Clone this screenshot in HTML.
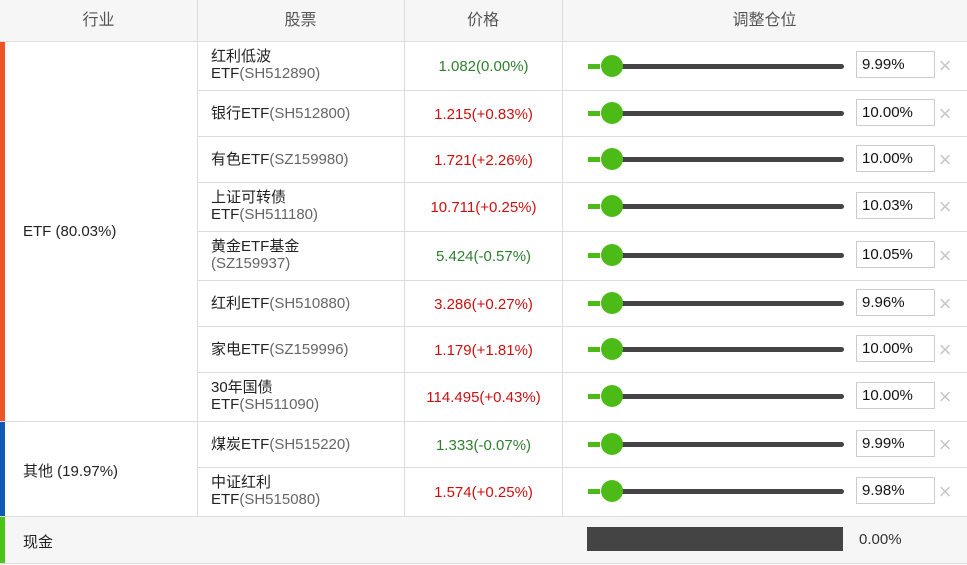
<!DOCTYPE html>
<html><head><meta charset="utf-8"><style>
*{margin:0;padding:0;box-sizing:border-box}
body{width:967px;height:565px;background:#fff;font-family:"Liberation Sans","Noto Sans CJK SC",sans-serif;font-size:15px;color:#222;position:relative;overflow:hidden}
.a{position:absolute}
.hl{position:absolute;height:1px;background:#ddd}
.vl{position:absolute;width:1px;background:#ddd}
.h{position:absolute;top:0;height:41px;line-height:41px;text-align:center;color:#555;font-size:16px}
.nm{position:absolute;left:211px;line-height:17px}
.nm span{color:#666}
.pr{position:absolute;left:405px;width:157px;text-align:center}
.g{color:#2f7f2f}.r{color:#cc1010}
.sl{position:absolute;left:587px;width:257px;height:24px}
.sl .gs{position:absolute;left:1px;top:10px;width:12px;height:5px;background:#4cbb17}
.sl .tr{position:absolute;left:26px;top:10px;width:231px;height:5px;border-radius:3px;background:#444}
.sl .k{position:absolute;left:14px;top:1px;width:22px;height:22px;border-radius:50%;background:#4cbb17}
.in{position:absolute;left:856px;width:79px;height:27px;border:1px solid #ccc;padding-left:5px;line-height:25px;color:#111}
.x{position:absolute;left:935px;width:20px;text-align:center;color:#c8c8c8;font-size:22px;line-height:22px}
</style></head><body>
<div class="a" style="left:0;top:0;width:967px;height:41px;background:#f6f6f6"></div>
<div class="a" style="left:0;top:516px;width:967px;height:48px;background:#f6f6f6"></div>
<div class="h" style="left:0;width:197px">行业</div>
<div class="h" style="left:197px;width:207px">股票</div>
<div class="h" style="left:404px;width:158px">价格</div>
<div class="h" style="left:562px;width:405px">调整仓位</div>
<div class="hl" style="left:0;top:41px;width:967px"></div>
<div class="hl" style="left:197px;top:90px;width:770px"></div>
<div class="hl" style="left:197px;top:136px;width:770px"></div>
<div class="hl" style="left:197px;top:182px;width:770px"></div>
<div class="hl" style="left:197px;top:231px;width:770px"></div>
<div class="hl" style="left:197px;top:280px;width:770px"></div>
<div class="hl" style="left:197px;top:326px;width:770px"></div>
<div class="hl" style="left:197px;top:372px;width:770px"></div>
<div class="hl" style="left:0;top:421px;width:967px"></div>
<div class="hl" style="left:197px;top:467px;width:770px"></div>
<div class="hl" style="left:0;top:516px;width:967px"></div>
<div class="hl" style="left:0;top:563px;width:967px"></div>
<div class="vl" style="left:197px;top:0;height:516px"></div>
<div class="vl" style="left:404px;top:0;height:516px"></div>
<div class="vl" style="left:562px;top:0;height:516px"></div>
<div class="a" style="left:0;top:42px;width:5px;height:379px;background:#ee5524"></div>
<div class="a" style="left:0;top:422px;width:5px;height:94px;background:#0d5bb5"></div>
<div class="a" style="left:0;top:517px;width:5px;height:46px;background:#4cc417"></div>
<div class="a" style="left:23px;top:223px">ETF (80.03%)</div>
<div class="a" style="left:23px;top:460px">其他 (19.97%)</div>
<div class="a" style="left:23px;top:531px">现金</div>

<div class="nm" style="top:48px">红利低波<br>ETF<span>(SH512890)</span></div>
<div class="nm" style="top:105px">银行ETF<span>(SH512800)</span></div>
<div class="nm" style="top:151px">有色ETF<span>(SZ159980)</span></div>
<div class="nm" style="top:189px">上证可转债<br>ETF<span>(SH511180)</span></div>
<div class="nm" style="top:238px">黄金ETF基金<br><span>(SZ159937)</span></div>
<div class="nm" style="top:295px">红利ETF<span>(SH510880)</span></div>
<div class="nm" style="top:341px">家电ETF<span>(SZ159996)</span></div>
<div class="nm" style="top:379px">30年国债<br>ETF<span>(SH511090)</span></div>
<div class="nm" style="top:436px">煤炭ETF<span>(SH515220)</span></div>
<div class="nm" style="top:474px">中证红利<br>ETF<span>(SH515080)</span></div>

<div class="pr g" style="top:58px">1.082(0.00%)</div>
<div class="pr r" style="top:106px">1.215(+0.83%)</div>
<div class="pr r" style="top:152px">1.721(+2.26%)</div>
<div class="pr r" style="top:199px">10.711(+0.25%)</div>
<div class="pr g" style="top:248px">5.424(-0.57%)</div>
<div class="pr r" style="top:296px">3.286(+0.27%)</div>
<div class="pr r" style="top:342px">1.179(+1.81%)</div>
<div class="pr r" style="top:389px">114.495(+0.43%)</div>
<div class="pr g" style="top:437px">1.333(-0.07%)</div>
<div class="pr r" style="top:484px">1.574(+0.25%)</div>

<div class="sl" style="top:54px"><div class="gs"></div><div class="tr"></div><div class="k"></div></div>
<div class="sl" style="top:101px"><div class="gs"></div><div class="tr"></div><div class="k"></div></div>
<div class="sl" style="top:147px"><div class="gs"></div><div class="tr"></div><div class="k"></div></div>
<div class="sl" style="top:194px"><div class="gs"></div><div class="tr"></div><div class="k"></div></div>
<div class="sl" style="top:243px"><div class="gs"></div><div class="tr"></div><div class="k"></div></div>
<div class="sl" style="top:291px"><div class="gs"></div><div class="tr"></div><div class="k"></div></div>
<div class="sl" style="top:337px"><div class="gs"></div><div class="tr"></div><div class="k"></div></div>
<div class="sl" style="top:384px"><div class="gs"></div><div class="tr"></div><div class="k"></div></div>
<div class="sl" style="top:432px"><div class="gs"></div><div class="tr"></div><div class="k"></div></div>
<div class="sl" style="top:479px"><div class="gs"></div><div class="tr"></div><div class="k"></div></div>

<div class="in" style="top:51px">9.99%</div>
<div class="in" style="top:99px">10.00%</div>
<div class="in" style="top:145px">10.00%</div>
<div class="in" style="top:192px">10.03%</div>
<div class="in" style="top:241px">10.05%</div>
<div class="in" style="top:289px">9.96%</div>
<div class="in" style="top:335px">10.00%</div>
<div class="in" style="top:382px">10.00%</div>
<div class="in" style="top:430px">9.99%</div>
<div class="in" style="top:477px">9.98%</div>

<div class="x" style="top:55px">×</div>
<div class="x" style="top:103px">×</div>
<div class="x" style="top:149px">×</div>
<div class="x" style="top:196px">×</div>
<div class="x" style="top:245px">×</div>
<div class="x" style="top:293px">×</div>
<div class="x" style="top:339px">×</div>
<div class="x" style="top:386px">×</div>
<div class="x" style="top:434px">×</div>
<div class="x" style="top:481px">×</div>

<div class="a" style="left:587px;top:527px;width:256px;height:24px;background:#444"></div>
<div class="a" style="left:859px;top:531px;color:#333">0.00%</div>
</body></html>
